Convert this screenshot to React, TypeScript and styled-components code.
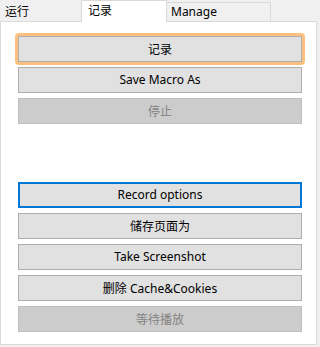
import styled, { createGlobalStyle, css } from "styled-components";

const GlobalStyle = createGlobalStyle`
  html, body {
    margin: 0;
    padding: 0;
    background: #f0f0f0;
  }
  body {
    font-family: "Noto Sans", "Noto Sans CJK SC", sans-serif;
    font-size: 12px;
    color: #000;
  }
`;

const Window = styled.div`
  width: 320px;
  height: 347px;
  box-sizing: border-box;
`;

const TabBar = styled.div`
  display: flex;
  align-items: flex-end;
  height: 21px;
  position: relative;
  z-index: 1;
`;

const Tab = styled.div<{ $active?: boolean; $width: number }>`
  box-sizing: border-box;
  width: ${(p) => p.$width}px;
  height: 19px;
  padding: 0 4px;
  display: flex;
  align-items: center;
  border: 1px solid #dadada;
  border-bottom: none;
  margin-left: -1px;
  background: #f0f0f0;
  font-family: "Noto Sans", "Noto Sans CJK SC", sans-serif;
  font-size: 12px;
  line-height: 1;
  &:first-child {
    margin-left: 0;
    border-color: transparent;
  }
  ${(p) =>
    p.$active &&
    css`
      height: 22px;
      margin-bottom: -1px;
      background: #fff;
      padding: 0 6px 1px;
    `}
`;

const Panel = styled.div`
  box-sizing: border-box;
  width: 317px;
  height: 324px;
  background: #fff;
  border: 1px solid #dadada;
  padding: 14px 14px 0 17px;
  display: flex;
  flex-direction: column;
`;

const Group = styled.div<{ $gapTop?: number }>`
  display: flex;
  flex-direction: column;
  gap: 5px;
  margin-top: ${(p) => p.$gapTop ?? 0}px;
`;

const Button = styled.button<{ $focus?: "orange" | "blue" }>`
  position: relative;
  box-sizing: border-box;
  width: 284px;
  height: 26px;
  margin: 0;
  padding: 0 0 1px;
  border: 1px solid #adadad;
  background: #e1e1e1;
  font-family: "Noto Sans", "Noto Sans CJK SC", sans-serif;
  font-size: 12px;
  color: #000;
  cursor: pointer;
  outline: none;
  &:disabled {
    background: #cccccc;
    border-color: #bfbfbf;
    color: #838383;
    cursor: default;
  }
  ${(p) =>
    p.$focus === "blue" &&
    css`
      border: 2px solid #0078d7;
    `}
  ${(p) =>
    p.$focus === "orange" &&
    css`
      &::after {
        content: "";
        position: absolute;
        inset: -4px;
        border: 3px solid #ffbf7f;
        border-radius: 4px;
        pointer-events: none;
      }
    `}
`;

export default function App() {
  return (
    <Window>
      <GlobalStyle />
      <TabBar>
        <Tab $width={82}>运行</Tab>
        <Tab $width={86} $active>
          记录
        </Tab>
        <Tab $width={105}>Manage</Tab>
      </TabBar>
      <Panel>
        <Group>
          <Button $focus="orange">记录</Button>
          <Button>Save Macro As</Button>
          <Button disabled>停止</Button>
        </Group>
        <Group $gapTop={58}>
          <Button $focus="blue">Record options</Button>
          <Button>储存页面为</Button>
          <Button>Take Screenshot</Button>
          <Button>删除 Cache&amp;Cookies</Button>
          <Button disabled>等待播放</Button>
        </Group>
      </Panel>
    </Window>
  );
}
